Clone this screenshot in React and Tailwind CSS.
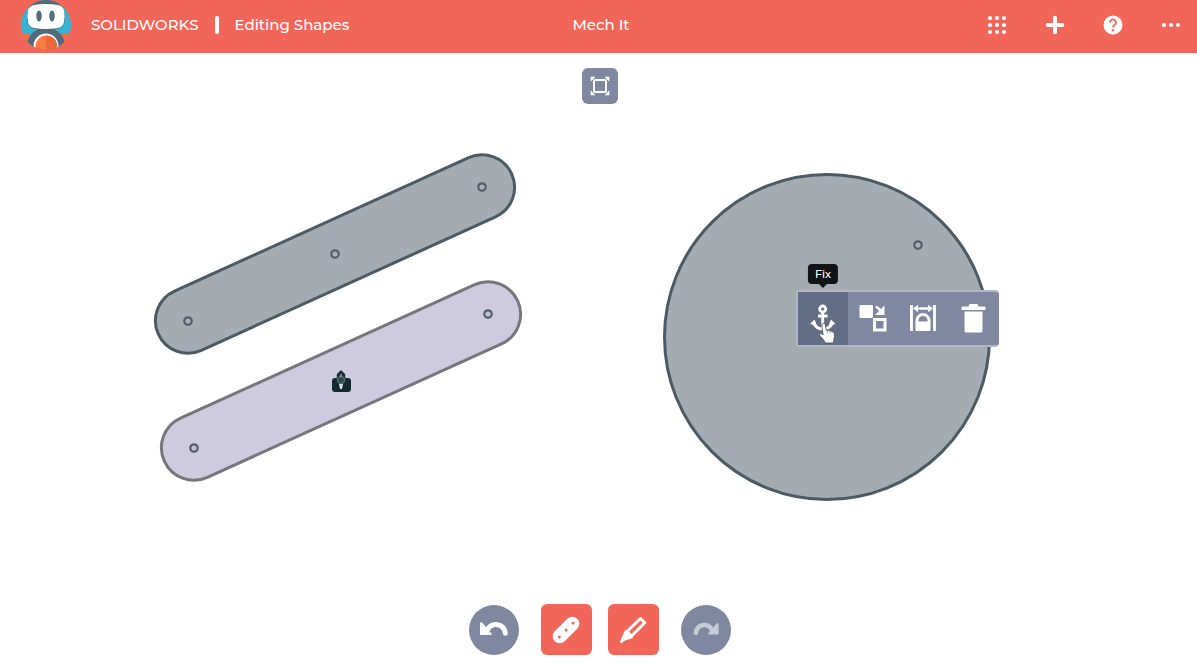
import React, { useState } from "react";

const Logo = () => (
  <svg width="50" height="50" viewBox="0 0 50 50" aria-hidden="true">
    <clipPath id="logo-clip">
      <circle cx="25" cy="25" r="25" />
    </clipPath>
    <g clipPath="url(#logo-clip)">
      <rect width="50" height="50" fill="#35b3d3" />
      <path d="M0 34h9l4 16H0zM50 34h-9l-4 16h13z" fill="#f0703f" />
      <path d="M5 50C6 35 13 28 25 28s19 7 20 22z" fill="#526b7c" />
      <path d="M8 1Q25-4 42 1l2 20q-2 7-8 8-11 2-22 0-6-1-8-8z" fill="#526b7c" />
      <path d="M13 5q12-2 24 0 5 1 6 5 1 7 0 12-1 5-6 6-12 2-24 0-5-1-6-6-1-5 0-12 1-4 6-5z" fill="#fff" />
      <ellipse cx="18" cy="16" rx="2.700" ry="5.500" fill="#526b7c" />
      <ellipse cx="31" cy="16" rx="2.700" ry="5.500" fill="#526b7c" />
      <circle cx="25" cy="46" r="11.500" fill="#ff7b42" stroke="#fff" strokeWidth="2" />
      <path d="M25 35.500A10.500 10.500 0 0 1 35.500 50H25z" fill="#ea6a37" />
    </g>
  </svg>
);

const GridIcon = () => (
  <svg width="20" height="20" viewBox="0 0 20 20" fill="currentColor">
    {[3, 10, 17].map((y) =>
      [3, 10, 17].map((x) => <circle key={`${x}-${y}`} cx={x} cy={y} r="2.100" />)
    )}
  </svg>
);

const PlusIcon = () => (
  <svg width="20" height="20" viewBox="0 0 20 20" fill="none" stroke="currentColor" strokeWidth="4" strokeLinecap="round">
    <path d="M10 2.700v14.600M2.700 10h14.600" />
  </svg>
);

const HelpIcon = () => (
  <svg width="20" height="20" viewBox="0 0 20 20">
    <circle cx="10" cy="10" r="9.500" fill="currentColor" />
    <path d="M7 7.600a3 3 0 1 1 4.700 2.300c-1 .8-1.600 1.200-1.600 2.600" fill="none" stroke="#f2665a" strokeWidth="1.900" />
    <circle cx="10" cy="15.200" r="1.200" fill="#f2665a" />
  </svg>
);

const MoreIcon = () => (
  <svg width="20" height="20" viewBox="0 0 20 20" fill="currentColor">
    <circle cx="3" cy="10" r="2.100" />
    <circle cx="10" cy="10" r="2.100" />
    <circle cx="17" cy="10" r="2.100" />
  </svg>
);

const FitIcon = () => (
  <svg width="20" height="20" viewBox="0 0 20 20" fill="none" stroke="currentColor" strokeWidth="2">
    <rect x="4" y="4" width="12" height="12" rx="1" />
    <path d="M1 5V1h4L1 5zM15 1h4v4l-4-4zM1 15v4h4l-4-4zM19 15v4h-4l4-4z" fill="currentColor" strokeWidth="0.600" />
  </svg>
);

const AnchorIcon = () => (
  <svg width="30" height="30" viewBox="0 0 30 30" fill="none" stroke="currentColor" strokeWidth="2.800">
    <circle cx="14.700" cy="5" r="3" />
    <path d="M14.700 8V25M10 12h9.500M5.500 19q3 6 9.200 6Q21.500 25 24.500 19" />
    <path d="M2 20L6.500 15.500l2.500 6zM27.500 20L23 15.500l-2.500 6z" fill="currentColor" stroke="none" />
  </svg>
);

const SwapIcon = () => (
  <svg width="30" height="30" viewBox="0 0 30 30" fill="none" stroke="currentColor" strokeWidth="3">
    <rect x="1.500" y="1" width="13.500" height="13" rx="1" fill="currentColor" stroke="none" />
    <rect x="16.500" y="15.500" width="10.500" height="10.500" />
    <path d="M18 2.500l6 5" strokeWidth="2.500" />
    <path d="M26.500 1.500v9.500h-9.500z" fill="currentColor" stroke="none" />
  </svg>
);

const SpacingIcon = () => (
  <svg width="30" height="30" viewBox="0 0 30 30" fill="none" stroke="currentColor">
    <path d="M3.500 1v26M26.500 1v26" strokeWidth="2.800" />
    <path d="M8 4.500h14" strokeWidth="2.400" />
    <path d="M5 4.500L10 .8v7.400zM25 4.500L20 .8v7.400z" fill="currentColor" stroke="none" />
    <path d="M9 19v-2.500a6 6 0 0 1 12 0V19" strokeWidth="2.800" />
    <rect x="7.500" y="17.500" width="15" height="9.500" rx="1" fill="currentColor" stroke="none" />
  </svg>
);

const TrashIcon = () => (
  <svg width="30" height="30" viewBox="0 0 30 30" fill="currentColor">
    <path d="M4 2.500h6.500l1-2.500h8l1 2.500H27q.5 0 .5.500v2.500q0 .5-.5.500H4Q3.500 6 3.500 5.500V3Q3.500 2.500 4 2.500z" />
    <path d="M6.500 7.500h18V27q0 1.500-1.500 1.500H8Q6.500 28.500 6.500 27z" />
  </svg>
);

const HandIcon = () => (
  <svg width="18" height="22" viewBox="0 0 16 20">
    <path
      d="M4.800 1.200q1.500 0 1.700 1.500l.8 5q2-.8 2.500.4 2-.5 2.500.7 2-.3 2.300 1.500.6 3-.3 5.200l-.4 3.500H6.500Q5.500 16 1.500 12.500q-1-1.800 1-2l2 1.200L3.200 3Q3.200 1.400 4.800 1.200z"
      fill="#fff"
      stroke="#555b6e"
      strokeWidth="0.800"
    />
    <path d="M8.300 8v2.500M10.700 8.500v2" stroke="#8a8fa0" strokeWidth="0.700" />
  </svg>
);

const UndoIcon = () => (
  <svg width="30" height="30" viewBox="0 0 30 30">
    <path d="M8.500 14.500C13 7 25 8 26.300 18.200" fill="none" stroke="currentColor" strokeWidth="5" strokeLinecap="round" />
    <path d="M1.500 7.500h1.500l9.500 11v1.500H2Q1 20 1 19V8z" fill="currentColor" />
  </svg>
);

const LinkShapeIcon = () => (
  <svg width="30" height="30" viewBox="0 0 30 30">
    <path d="M8.700 21.300L21.300 8.700" stroke="currentColor" strokeWidth="14" strokeLinecap="round" />
    <g fill="#f2665a">
      <circle cx="8.300" cy="22" r="1.500" />
      <circle cx="15" cy="15" r="1.500" />
      <circle cx="22" cy="8" r="1.500" />
    </g>
  </svg>
);

const PenIcon = () => (
  <svg width="30" height="30" viewBox="0 0 30 30" strokeLinejoin="round" stroke="currentColor">
    <path d="M22.500 3.500L26.800 7.800 13.500 21 9 16.500z" fill="none" strokeWidth="3" />
    <path d="M7.500 16l6.500 6.500-6.500 2L4.500 26l-1 1.500-.8-.8 1-1.700.8-2.500z" fill="currentColor" strokeWidth="1.500" />
  </svg>
);

const Pin = ({ x, y }) => (
  <circle cx={x} cy={y} r="3.700" fill="#b3b9c1" fillOpacity="0.500" stroke="#525d69" strokeWidth="2.200" />
);

const Bar = ({ x, y, fill, stroke, children }) => (
  <g transform={`translate(${x} ${y})`}>
    <rect x="-194" y="-32.500" width="388" height="65" rx="32.500" transform="rotate(-24.400)" fill={fill} stroke={stroke} strokeWidth="3" />
    <Pin x={-147} y={67} />
    <Pin x={147} y={-67} />
    {children}
  </g>
);

const Drawing = () => (
  <svg className="absolute inset-0 h-full w-full" role="img" aria-label="Sketch">
    <Bar x={335} y={201} fill="#a4abb1" stroke="#4b5b65">
      <Pin x={0} y={0} />
    </Bar>
    <Bar x={341} y={328} fill="#cecbe1" stroke="#78757b">
      <path d="M-3.500-2v-4.500L0-10l3.500 3.500V-2" fill="#1b3136" stroke="#1b3136" strokeWidth="1.500" strokeLinejoin="round" />
      <rect x="-9" y="-3" width="19" height="14" rx="3" fill="#142a2e" />
      <circle cx="0" cy="-1" r="3.500" fill="#33494e" stroke="#526a6d" strokeWidth="1.500" />
      <path d="M0-7v3" stroke="#8ba09f" strokeWidth="1.500" />
      <path d="M-2 3h4L1 8h-2z" fill="#d9e6e0" />
    </Bar>
    <circle cx="827" cy="284" r="162.500" fill="#a4abb1" stroke="#4b5b65" strokeWidth="3" />
    <Pin x={918} y={192} />
  </svg>
);

const shapeActions = [
  { label: "Fix", Icon: AnchorIcon },
  { label: "Replace", Icon: SwapIcon },
  { label: "Lock size", Icon: SpacingIcon },
  { label: "Delete", Icon: TrashIcon },
];

const ShapeMenu = () => {
  const [active, setActive] = useState("Fix");

  return (
    <div className="absolute top-[237px] left-[796px] flex rounded-sm border-2 border-r-0 border-[#b2b8bf] bg-[#7f87a1] pr-px text-white">
      {shapeActions.map(({ label, Icon }) => (
        <button
          key={label}
          aria-label={label}
          onMouseEnter={() => setActive(label)}
          className={`relative flex h-[53px] w-[50px] items-center justify-center ${active === label ? "bg-[#646d86]" : ""}`}
        >
          <Icon />
          {active === label && (
            <>
              <span className="absolute bottom-full left-1/2 mb-2 -translate-x-1/2 rounded-sm bg-[#111317] px-[7px] py-0.5 text-[11px] leading-4 font-medium whitespace-nowrap">
                {label}
                <span className="absolute top-full left-1/2 -translate-x-1/2 border-4 border-b-0 border-transparent border-t-[#111317]" />
              </span>
              <span className="absolute top-[30px] left-5">
                <HandIcon />
              </span>
            </>
          )}
        </button>
      ))}
    </div>
  );
};

const App = () => {
  return (
    <div className="flex min-h-screen flex-col bg-white font-['Montserrat','Inter',sans-serif]">
      <header className="grid h-[53px] grid-cols-[1fr_auto_1fr] items-center overflow-hidden bg-[#f2665a] pr-4 pb-1 pl-[21px] text-[15px] font-medium text-white">
        <div className="flex items-center">
          <Logo />
          <span className="ml-5">SOLIDWORKS</span>
          <span className="mx-4 h-[18px] w-1 rounded-sm bg-white" />
          <span>Editing Shapes</span>
        </div>
        <h1>Mech It</h1>
        <nav className="flex items-center justify-end gap-[38px]">
          <button aria-label="Apps"><GridIcon /></button>
          <button aria-label="Add"><PlusIcon /></button>
          <button aria-label="Help"><HelpIcon /></button>
          <button aria-label="More"><MoreIcon /></button>
        </nav>
      </header>

      <main className="relative flex flex-1 flex-col items-center justify-between pt-[15px] pb-[15px] pl-0.5">
        <Drawing />
        <button aria-label="Fit to screen" className="relative flex h-9 w-9 items-center justify-center rounded-md bg-[#7f87a1] text-white">
          <FitIcon />
        </button>
        <ShapeMenu />

        <div className="relative flex items-center gap-[22px] text-white">
          <button aria-label="Undo" className="flex h-[50px] w-[50px] items-center justify-center rounded-full bg-[#7f87a1]">
            <UndoIcon />
          </button>
          <div className="flex gap-4">
            <button aria-label="Link" className="flex h-[51px] w-[51px] items-center justify-center rounded-md bg-[#f2665a]">
              <LinkShapeIcon />
            </button>
            <button aria-label="Draw" className="flex h-[51px] w-[51px] items-center justify-center rounded-md bg-[#f2665a]">
              <PenIcon />
            </button>
          </div>
          <button aria-label="Redo" className="flex h-[50px] w-[50px] items-center justify-center rounded-full bg-[#7f87a1] text-[#c5ccd6]">
            <span className="scale-x-[-0.9] scale-y-90">
              <UndoIcon />
            </span>
          </button>
        </div>
      </main>
    </div>
  );
};

export default App;
